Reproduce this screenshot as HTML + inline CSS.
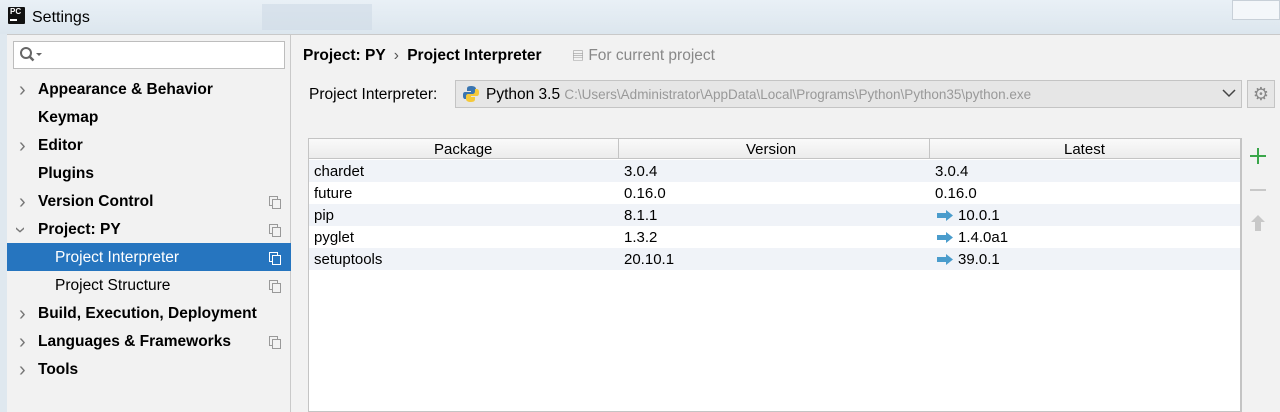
<!DOCTYPE html>
<html><head><style>
*{margin:0;padding:0;box-sizing:border-box}
body{width:1280px;height:412px;overflow:hidden;background:#dfe8ef;font-family:"Liberation Sans","Noto Sans CJK SC",sans-serif;font-size:15px;color:#000;position:relative}
.abs{position:absolute}
.title{left:0;top:0;width:1280px;height:34px;background:linear-gradient(#e9f0f6,#dce6ee)}
.win{left:7px;top:34px;width:1273px;height:378px;background:#f2f2f2;border-top:1px solid #c9c9c9}
.side{left:7px;top:35px;width:284px;height:377px;background:#f2f2f2;border-right:1px solid #c9c9c9}
.item{position:absolute;left:0;width:284px;height:28px;line-height:30px;font-weight:bold;font-size:15.5px}
.item .a{position:absolute;left:12px;color:#777;font-weight:normal;font-size:20px}
.item span.t{position:absolute;left:31px}
.sub span.t{left:48px;font-weight:normal}
.cp{position:absolute;left:262px;top:9px;width:9px;height:10px;border:1px solid #999}
.cp:after{content:"";position:absolute;left:2px;top:2px;width:7px;height:8px;border:1px solid #999;background:#f2f2f2}
.sel{background:#2675bf;color:#fff}
.sel .cp:after{background:#2675bf;border-color:#fff}
.row{position:absolute;left:309px;width:931px;height:22px;line-height:23px;font-size:15px}
.row span{position:absolute}
.arr{display:inline-block;width:16px;height:11px;vertical-align:-1px;margin-right:5px}
</style></head><body>
<div class="abs title"></div>
<div class="abs" style="left:8px;top:7px;width:17px;height:17px;background:#111;border-radius:1px;"><div style="color:#fff;font-size:8px;font-weight:bold;padding:1px 0 0 2px;line-height:8px">PC</div><div style="position:absolute;left:2px;top:12px;width:7px;height:2px;background:#fff"></div></div>
<div class="abs" style="left:32px;top:9px;font-size:16px">Settings</div>
<div class="abs" style="left:262px;top:4px;width:110px;height:26px;background:#cfdbe6;opacity:.6"></div>
<div class="abs" style="left:1232px;top:0;width:48px;height:20px;border:1px solid #c8d0d8;background:#f4f7fa"></div>
<div class="abs win"></div>
<div class="abs side">
 <div class="abs" style="left:6px;top:6px;width:272px;height:28px;background:#fff;border:1px solid #bdbdbd"><svg width="30" height="26" style="position:absolute;left:3px;top:0"><circle cx="9" cy="11" r="5" fill="none" stroke="#666" stroke-width="2"/><path d="M12.5 14.5l4 4" stroke="#666" stroke-width="2.5"/><path d="M19 11h6l-3 3z" fill="#666"/></svg></div>
 <div class="item" style="top:40px"><span class="a">›</span><span class="t">Appearance &amp; Behavior</span></div>
 <div class="item" style="top:68px"><span class="t">Keymap</span></div>
 <div class="item" style="top:96px"><span class="a">›</span><span class="t">Editor</span></div>
 <div class="item" style="top:124px"><span class="t">Plugins</span></div>
 <div class="item" style="top:152px"><span class="a">›</span><span class="t">Version Control</span><i class="cp"></i></div>
 <div class="item" style="top:180px"><span class="a" style="transform:rotate(90deg);left:10px">›</span><span class="t">Project: PY</span><i class="cp"></i></div>
 <div class="item sub sel" style="top:208px"><span class="t">Project Interpreter</span><i class="cp" style="border-color:#fff"></i></div>
 <div class="item sub" style="top:236px"><span class="t">Project Structure</span><i class="cp"></i></div>
 <div class="item" style="top:264px"><span class="a">›</span><span class="t">Build, Execution, Deployment</span></div>
 <div class="item" style="top:292px"><span class="a">›</span><span class="t">Languages &amp; Frameworks</span><i class="cp"></i></div>
 <div class="item" style="top:320px"><span class="a">›</span><span class="t">Tools</span></div>
</div>
<div class="abs" style="left:303px;top:47px;font-weight:bold;font-size:15.5px">Project: PY <span style="font-weight:normal;color:#555;margin:0 4px">›</span> Project Interpreter</div>
<div class="abs" style="left:572px;top:47px;color:#888;font-size:15.5px"><span style="font-size:12px">▤</span> For current project</div>
<div class="abs" style="left:309px;top:86px;font-size:15.5px">Project Interpreter:</div>
<div class="abs" style="left:455px;top:80px;width:787px;height:28px;background:#e6e6e6;border:1px solid #c4c4c4"></div>
<svg class="abs" style="left:462px;top:85px" width="18" height="18"><path d="M9 1c-4 0-4 2-4 3v2h4v1H3c-2 0-2 2-2 4s1 3 2 3h2v-2c0-2 1-3 3-3h4c1 0 2-1 2-2V4c0-2-2-3-5-3z" fill="#3a75b0"/><path d="M9 17c4 0 4-2 4-3v-2H9v-1h6c2 0 2-2 2-4s-1-3-2-3h-2v2c0 2-1 3-3 3H6c-1 0-2 1-2 2v3c0 2 2 3 5 3z" fill="#f5c93a"/></svg>
<div class="abs" style="left:486px;top:86px;font-size:15.5px">Python 3.5 <span style="color:#999;font-size:13.5px">C:\Users\Administrator\AppData\Local\Programs\Python\Python35\python.exe</span></div>
<svg class="abs" style="left:1222px;top:88px" width="14" height="10"><path d="M1 2l6 6 6-6" fill="none" stroke="#444" stroke-width="1.5"/></svg>
<div class="abs" style="left:1247px;top:80px;width:28px;height:28px;background:#e6e6e6;border:1px solid #c4c4c4;color:#888;text-align:center;line-height:26px;font-size:18px">⚙</div>
<div class="abs" style="left:308px;top:138px;width:933px;height:274px;background:#fff;border:1px solid #c4c4c4"></div>
<div class="abs" style="left:309px;top:139px;width:931px;height:20px;background:linear-gradient(#fafafa,#ececec);border-bottom:1px solid #c4c4c4"></div>
<div class="abs" style="left:618px;top:139px;width:1px;height:20px;background:#c4c4c4"></div>
<div class="abs" style="left:929px;top:139px;width:1px;height:20px;background:#c4c4c4"></div>
<div class="abs" style="left:434px;top:141px">Package</div>
<div class="abs" style="left:746px;top:141px">Version</div>
<div class="abs" style="left:1064px;top:141px">Latest</div>
<svg width="0" height="0" style="position:absolute"><defs><symbol id="ar" viewBox="0 0 16 11"><path d="M0 3h9V0l7 5.5-7 5.5V8H0z" fill="#4a9ccc"/></symbol></defs></svg>
<div class="row" style="top:160px;background:#f0f3f8"><span style="left:5px">chardet</span><span style="left:315px">3.0.4</span><span style="left:626px">3.0.4</span></div>
<div class="row" style="top:182px"><span style="left:5px">future</span><span style="left:315px">0.16.0</span><span style="left:626px">0.16.0</span></div>
<div class="row" style="top:204px;background:#f0f3f8"><span style="left:5px">pip</span><span style="left:315px">8.1.1</span><span style="left:628px"><svg class="arr"><use href="#ar"/></svg>10.0.1</span></div>
<div class="row" style="top:226px"><span style="left:5px">pyglet</span><span style="left:315px">1.3.2</span><span style="left:628px"><svg class="arr"><use href="#ar"/></svg>1.4.0a1</span></div>
<div class="row" style="top:248px;background:#f0f3f8"><span style="left:5px">setuptools</span><span style="left:315px">20.10.1</span><span style="left:628px"><svg class="arr"><use href="#ar"/></svg>39.0.1</span></div>
<div class="abs" style="left:1241px;top:138px;width:34px;height:274px;border-left:1px solid #c4c4c4"></div>
<svg class="abs" style="left:1249px;top:147px" width="18" height="18"><path d="M9 1v16M1 9h16" stroke="#3aa64a" stroke-width="2"/></svg>
<svg class="abs" style="left:1249px;top:181px" width="18" height="18"><path d="M1 9h16" stroke="#c8c8c8" stroke-width="2"/></svg>
<svg class="abs" style="left:1250px;top:214px" width="16" height="18"><path d="M8 1l7 7h-4v9H5V8H1z" fill="#c8c8c8"/></svg>
</body></html>
